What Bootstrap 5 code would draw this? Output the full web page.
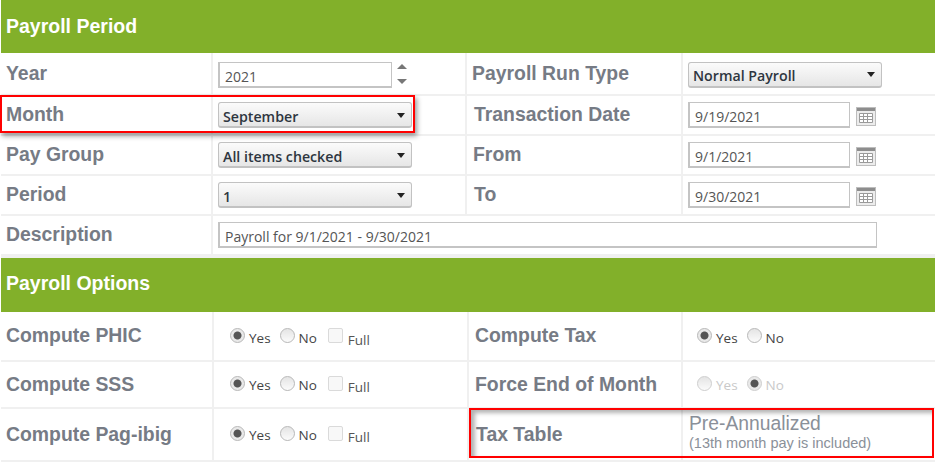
<!DOCTYPE html>
<html lang="en">
<head>
<meta charset="utf-8">
<title>Payroll Period</title>
<link href="https://cdn.jsdelivr.net/npm/bootstrap@5.3.0/dist/css/bootstrap.min.css" rel="stylesheet">
<style>
html,body{background:#fff;margin:0;overflow:hidden}
.sheet{position:relative;width:934px;margin-left:1px;font-family:"Open Sans","Liberation Sans",sans-serif}
.grid-form{table-layout:fixed;width:934px;margin:0;border-collapse:collapse}
.grid-form td{padding:0 0 0 5px;border:1px solid #f0f0f0;border-width:0 2px 2px 0;vertical-align:middle;background:#fff;color:#333;box-shadow:none}
.grid-form td:last-child{border-right:0}
.grid-form td.lbl{padding-left:5px;padding-bottom:1px;font:bold 19.4px "Liberation Sans",sans-serif;color:#767b85}
.grid-form td.lbl.x6{padding-left:6px}
.grid-form td.lbl.x7{padding-left:7px}
.grid-form tr.band td{background:#82b02a;color:#fff;font:bold 19.5px "Liberation Sans",sans-serif;padding-left:5px;border:0}
.grid-form tr.band.up3 td{padding-bottom:4px}
.grid-form tr.first td{padding-top:2px}
.grid-form tr.first td.lbl{padding-top:0;padding-bottom:0}
.h53{height:53px}.h42{height:42px}.h40{height:40px}.h54{height:54px}.h49{height:49px}.h47{height:47px}.h53b{height:53px}
.gap2{height:2px;background:#f0f0f0}
.fld{display:block;height:26px;padding:4px 5px 0;border:2px solid #c4c4c4;border-width:1px 1px 2px 2px;border-radius:0;font-size:14px;line-height:20px;color:#555;background:#fff;box-shadow:none}
.w174{width:174px}.w162{width:162px}.w659{width:659px}
.pick{display:flex;justify-content:space-between;align-items:center;width:194px;height:26px;padding:4px 6px 0 4px;border:1px solid #c2c2c2;border-bottom-width:2px;border-radius:3px;background:linear-gradient(#fbfbfb,#e6e6e6);font-size:14.2px;font-weight:600;color:#2e3640}
.caret-d{width:0;height:0;border:4.5px solid transparent;border-top:5px solid #222;border-bottom:0;margin-top:-3px}
.spin{display:flex;flex-direction:column;gap:10px;margin-left:5px;margin-top:-1px}
.spin i{display:block;width:0;height:0;border-left:5px solid transparent;border-right:5px solid transparent}
.spin .up{border-bottom:5px solid #777}
.spin .dn{border-top:5px solid #777}
.cal{margin-left:6px;margin-top:2px}
.opts{display:flex;align-items:center;padding-left:11px;padding-top:2px;font-size:13.5px;color:#444}
.opts.rt{padding-left:9px}
.opts.off{color:#c9c9c9}
.rd,.cb{appearance:none;-webkit-appearance:none;flex:none;margin:0;background:linear-gradient(#e4e4e4,#fbfbfb);border:1px solid #b9b9b9}
.rd{width:15px;height:15px;border-radius:50%;margin-right:4px;margin-top:-3px}
.rd:checked{background:radial-gradient(circle,#555 0 3.5px,#e9e9e9 4.5px)}
.rd.off{border-color:#cfcfcf}
.cb{width:15px;height:15px;border-radius:2px;margin-left:2px;margin-right:5px;margin-top:-3px;border-color:#dadada;background:#f8f8f8}
.opt-t{margin-right:9px;margin-top:3px}
.opt-f{margin-top:7px;color:#555}
.lower .opts{padding-top:1px}
.lower .opt-t{margin-top:1px}
.lower .opt-f{margin-top:5px}
.tax-a{font:19.3px/18px "Liberation Sans",sans-serif;color:#8a9099;margin-left:1px;margin-top:-3px}
.tax-b{font:14.5px/16px "Liberation Sans",sans-serif;color:#8a9099;margin-left:1px;margin-top:2px}
.redbox{position:absolute;border:2px solid #f00;pointer-events:none}
.rb1{left:-1px;top:95px;width:415px;height:38px;box-shadow:2px 3px 5px rgba(0,0,0,.4)}
.rb2{left:468px;top:408px;width:465px;height:50px;box-shadow:inset 4px 3px 4px rgba(0,0,0,.3)}
</style>
</head>
<body>
<div class="sheet">
<table class="table grid-form">
<colgroup><col style="width:211px"><col style="width:254px"><col style="width:216px"><col></colgroup>
<tr class="band h53"><td colspan="4">Payroll Period</td></tr>
<tr class="h42 first">
<td class="lbl">Year</td>
<td><div class="d-flex align-items-center"><input class="fld w174" value="2021" readonly><span class="spin"><i class="up"></i><i class="dn"></i></span></div></td>
<td class="lbl">Payroll Run Type</td>
<td><div class="pick"><span>Normal Payroll</span><span class="caret-d"></span></div></td>
</tr>
<tr class="h40">
<td class="lbl">Month</td>
<td><div class="pick"><span>September</span><span class="caret-d"></span></div></td>
<td class="lbl x7">Transaction Date</td>
<td><div class="d-flex align-items-center"><input class="fld w162" value="9/19/2021" readonly><svg class="cal" width="20" height="19" viewBox="0 0 20 19"><rect x=".5" y=".5" width="19" height="18" fill="#ececec" stroke="#bdbdbd"/><rect x="1" y="1" width="18" height="3" fill="#8d8d8d"/><path d="M3.5 6.5h13v9h-13zM3.5 9.5h13M3.5 12.5h13M7.5 6.5v9M11.5 6.5v9" fill="#fff" stroke="#9a9a9a"/></svg></div></td>
</tr>
<tr class="h40">
<td class="lbl">Pay Group</td>
<td><div class="pick"><span>All items checked</span><span class="caret-d"></span></div></td>
<td class="lbl x6">From</td>
<td><div class="d-flex align-items-center"><input class="fld w162" value="9/1/2021" readonly><svg class="cal" width="20" height="19" viewBox="0 0 20 19"><rect x=".5" y=".5" width="19" height="18" fill="#ececec" stroke="#bdbdbd"/><rect x="1" y="1" width="18" height="3" fill="#8d8d8d"/><path d="M3.5 6.5h13v9h-13zM3.5 9.5h13M3.5 12.5h13M7.5 6.5v9M11.5 6.5v9" fill="#fff" stroke="#9a9a9a"/></svg></div></td>
</tr>
<tr class="h40">
<td class="lbl">Period</td>
<td><div class="pick"><span>1</span><span class="caret-d"></span></div></td>
<td class="lbl x7">To</td>
<td><div class="d-flex align-items-center"><input class="fld w162" value="9/30/2021" readonly><svg class="cal" width="20" height="19" viewBox="0 0 20 19"><rect x=".5" y=".5" width="19" height="18" fill="#ececec" stroke="#bdbdbd"/><rect x="1" y="1" width="18" height="3" fill="#8d8d8d"/><path d="M3.5 6.5h13v9h-13zM3.5 9.5h13M3.5 12.5h13M7.5 6.5v9M11.5 6.5v9" fill="#fff" stroke="#9a9a9a"/></svg></div></td>
</tr>
<tr class="h40">
<td class="lbl">Description</td>
<td colspan="3"><input class="fld w659" value="Payroll for 9/1/2021 - 9/30/2021" readonly></td>
</tr>
</table>
<div class="gap2"></div>
<table class="table grid-form">
<colgroup><col style="width:212px"><col style="width:255px"><col style="width:214px"><col></colgroup>
<tr class="band up3 h54"><td colspan="4">Payroll Options</td></tr>
<tr class="h49">
<td class="lbl">Compute PHIC</td>
<td><div class="opts"><input type="radio" class="rd" name="a" checked><span class="opt-t">Yes</span><input type="radio" class="rd" name="a"><span class="opt-t">No</span><input type="checkbox" class="cb"><span class="opt-f">Full</span></div></td>
<td class="lbl x6">Compute Tax</td>
<td><div class="opts rt"><input type="radio" class="rd" name="b" checked><span class="opt-t">Yes</span><input type="radio" class="rd" name="b"><span class="opt-t">No</span></div></td>
</tr>
<tr class="h47 lower">
<td class="lbl">Compute SSS</td>
<td><div class="opts"><input type="radio" class="rd" name="c" checked><span class="opt-t">Yes</span><input type="radio" class="rd" name="c"><span class="opt-t">No</span><input type="checkbox" class="cb"><span class="opt-f">Full</span></div></td>
<td class="lbl x6">Force End of Month</td>
<td><div class="opts rt off"><input type="radio" class="rd off" name="d" disabled><span class="opt-t">Yes</span><input type="radio" class="rd off" name="d" checked disabled><span class="opt-t">No</span></div></td>
</tr>
<tr class="h53b lower">
<td class="lbl">Compute Pag-ibig</td>
<td><div class="opts"><input type="radio" class="rd" name="e" checked><span class="opt-t">Yes</span><input type="radio" class="rd" name="e"><span class="opt-t">No</span><input type="checkbox" class="cb"><span class="opt-f">Full</span></div></td>
<td class="lbl x7">Tax Table</td>
<td><div class="tax-a">Pre-Annualized</div><div class="tax-b">(13th month pay is included)</div></td>
</tr>
</table>
<div class="redbox rb1"></div>
<div class="redbox rb2"></div>
</div>
<script src="https://cdn.jsdelivr.net/npm/bootstrap@5.3.0/dist/js/bootstrap.bundle.min.js"></script>
</body>
</html>
